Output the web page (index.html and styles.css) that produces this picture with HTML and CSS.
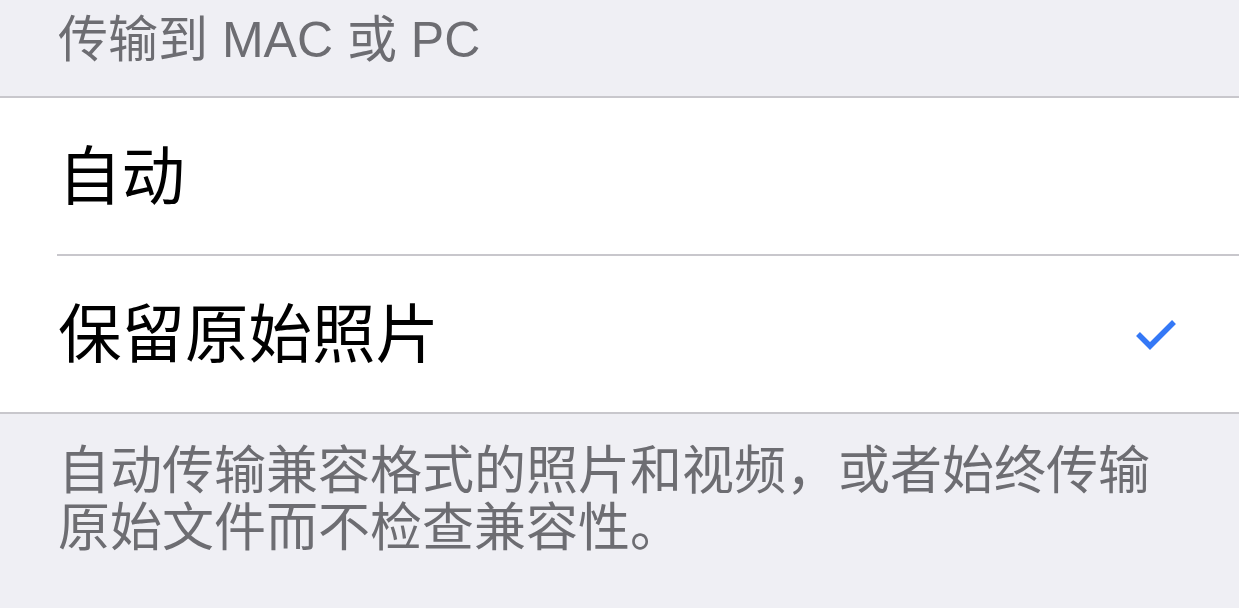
FILE: index.html
```html
<!DOCTYPE html>
<html lang="zh-CN">
<head>
<meta charset="utf-8">
<link rel="stylesheet" href="styles.css">
</head>
<body>
<div class="page">
  <div class="section-header">传输到 MAC 或 PC</div>
  <div class="group">
    <div class="row">
      <span class="label">自动</span>
    </div>
    <div class="row last">
      <span class="label">保留原始照片</span>
      <svg class="check" width="44" height="34" viewBox="0 0 44 34">
        <path d="M4 17 L16 29 L40 5" fill="none" stroke="#3478f6" stroke-width="5.5" stroke-linecap="butt" stroke-linejoin="miter"/>
      </svg>
    </div>
  </div>
  <div class="footer">自动传输兼容格式的照片和视频，或者始终传输原始文件而不检查兼容性。</div>
</div>
</body>
</html>
```
FILE: styles.css
```css
html, body {
  margin: 0;
  padding: 0;
  background: #efeff4;
}
.page {
  width: 1239px;
  height: 608px;
  overflow: hidden;
  font-family: "Noto Sans CJK SC", "Noto Sans", sans-serif;
}
.section-header {
  height: 96px;
  box-sizing: border-box;
  padding: 6px 0 0 58px;
  font-family: "Liberation Sans", "Noto Sans CJK SC", sans-serif;
  font-size: 50px;
  line-height: 68px;
  color: #6d6d72;
}
.group {
  background: #ffffff;
  border-top: 2px solid #c8c7cc;
  border-bottom: 2px solid #c8c7cc;
}
.row {
  margin-left: 57px;
  height: 156px;
  border-bottom: 2px solid #c8c7cc;
  display: flex;
  align-items: center;
  justify-content: space-between;
  padding-right: 60px;
}
.row.last {
  border-bottom: none;
}
.label {
  font-size: 63.5px;
  color: #000000;
  padding-left: 1px;
  line-height: 1;
  margin-bottom: 8px;
}
.check {
  display: block;
  margin-right: 1px;
}
.footer {
  padding: 24px 40px 0 58px;
  font-size: 52px;
  line-height: 57px;
  color: #6d6d72;
}
```
